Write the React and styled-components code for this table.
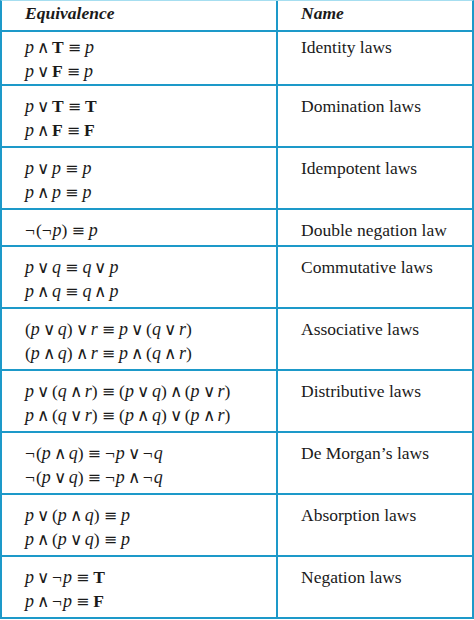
import React from 'react';
import styled, { createGlobalStyle, css } from 'styled-components';

const GlobalStyle = createGlobalStyle`
  html, body {
    margin: 0;
    padding: 0;
    background: #fff;
  }

  body {
    font-family: "Liberation Serif", "Times New Roman", serif;
    color: #1a1a1a;
  }
`;

const Table = styled.div`
  width: 474px;
  box-sizing: border-box;
  border-top: 1px solid #a6def0;
  border-left: 2px solid #1d99c9;
  border-right: 2px solid #1d99c9;
`;

const Row = styled.div`
  display: grid;
  grid-template-columns: 276px 1fr;
  box-sizing: border-box;
  height: 62px;
  border-bottom: 2px solid #1d99c9;

  ${props => props.$single && css`
    height: 37px;
  `}

  ${props => props.$compact && css`
    height: 54px;
  `}

  ${props => props.$header && css`
    height: 31px;
  `}
`;

const Cell = styled.div`
  box-sizing: border-box;
  padding: 8px 0 0 23px;
  font-family: "Liberation Serif", "Times New Roman", serif;
  font-size: 17.5px;
  line-height: 24px;
  white-space: nowrap;

  ${props => props.$left && css`
    border-right: 2px solid #1d99c9;
  `}

  ${props => props.$compact && css`
    padding-top: 3px;
  `}

  ${props => props.$header && css`
    padding-top: 0;
    font-weight: bold;
    font-style: italic;
  `}
`;

const Line = styled.div`
  display: flex;
  align-items: baseline;
  height: 24px;
`;

const Var = styled.span`
  font-style: italic;
  font-size: 18px;
`;

const Const = styled.span`
  font-weight: bold;
`;

const Op = styled.span`
  font-family: "DejaVu Sans", sans-serif;
  font-weight: 200;
  font-size: 17px;
  line-height: 24px;
  margin: 0 3px;
`;

const Equiv = styled.span`
  font-family: "DejaVu Serif", serif;
  font-size: 16px;
  line-height: 24px;
  margin: 0 4px;
`;

const Neg = styled.span`
  margin-right: 1px;
`;

const Paren = styled.span``;

const laws = [
  { eq: ['p ∧ T ≡ p', 'p ∨ F ≡ p'], name: 'Identity laws', compact: true },
  { eq: ['p ∨ T ≡ T', 'p ∧ F ≡ F'], name: 'Domination laws' },
  { eq: ['p ∨ p ≡ p', 'p ∧ p ≡ p'], name: 'Idempotent laws' },
  { eq: ['¬(¬p) ≡ p'], name: 'Double negation law' },
  { eq: ['p ∨ q ≡ q ∨ p', 'p ∧ q ≡ q ∧ p'], name: 'Commutative laws' },
  { eq: ['(p ∨ q) ∨ r ≡ p ∨ (q ∨ r)', '(p ∧ q) ∧ r ≡ p ∧ (q ∧ r)'], name: 'Associative laws' },
  { eq: ['p ∨ (q ∧ r) ≡ (p ∨ q) ∧ (p ∨ r)', 'p ∧ (q ∨ r) ≡ (p ∧ q) ∨ (p ∧ r)'], name: 'Distributive laws' },
  { eq: ['¬(p ∧ q) ≡ ¬p ∨ ¬q', '¬(p ∨ q) ≡ ¬p ∧ ¬q'], name: 'De Morgan’s laws' },
  { eq: ['p ∨ (p ∧ q) ≡ p', 'p ∧ (p ∨ q) ≡ p'], name: 'Absorption laws' },
  { eq: ['p ∨ ¬p ≡ T', 'p ∧ ¬p ≡ F'], name: 'Negation laws' },
];

const Formula = ({ text }) => (
  <Line>
    {[...text].filter(ch => ch !== ' ').map((ch, i) => {
      if ('pqr'.includes(ch)) return <Var key={i}>{ch}</Var>;
      if ('TF'.includes(ch)) return <Const key={i}>{ch}</Const>;
      if (ch === '¬') return <Neg key={i}>{ch}</Neg>;
      if (ch === '≡') return <Equiv key={i}>{ch}</Equiv>;
      if ('()'.includes(ch)) return <Paren key={i}>{ch}</Paren>;
      return <Op key={i}>{ch}</Op>;
    })}
  </Line>
);

export default function App() {
  return (
    <>
      <GlobalStyle />
      <Table>
        <Row $header>
          <Cell $left $header>Equivalence</Cell>
          <Cell $header>Name</Cell>
        </Row>

        {laws.map(law => (
          <Row key={law.name} $single={law.eq.length === 1} $compact={law.compact}>
            <Cell $left $compact={law.compact}>
              {law.eq.map(f => <Formula key={f} text={f} />)}
            </Cell>
            <Cell $compact={law.compact}>{law.name}</Cell>
          </Row>
        ))}
      </Table>
    </>
  );
}
